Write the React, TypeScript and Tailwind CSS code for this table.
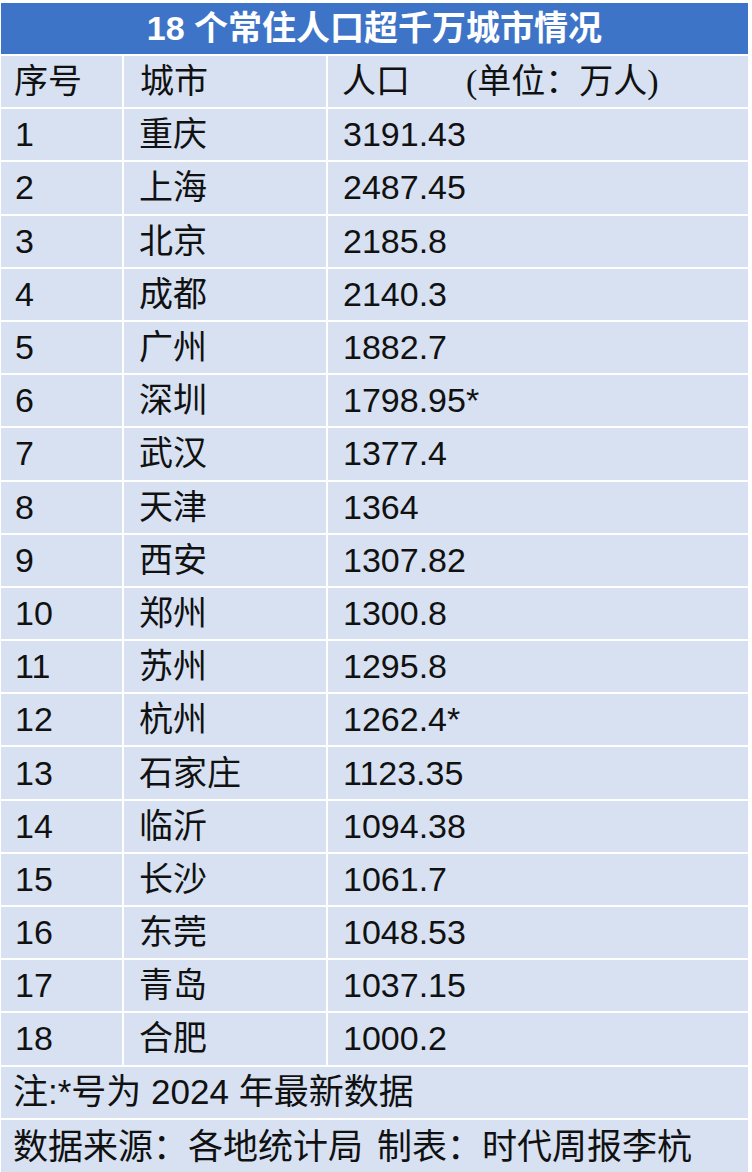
import React from 'react';

const rows: [string, string, string][] = [
  ['1', '重庆', '3191.43'],
  ['2', '上海', '2487.45'],
  ['3', '北京', '2185.8'],
  ['4', '成都', '2140.3'],
  ['5', '广州', '1882.7'],
  ['6', '深圳', '1798.95*'],
  ['7', '武汉', '1377.4'],
  ['8', '天津', '1364'],
  ['9', '西安', '1307.82'],
  ['10', '郑州', '1300.8'],
  ['11', '苏州', '1295.8'],
  ['12', '杭州', '1262.4*'],
  ['13', '石家庄', '1123.35'],
  ['14', '临沂', '1094.38'],
  ['15', '长沙', '1061.7'],
  ['16', '东莞', '1048.53'],
  ['17', '青岛', '1037.15'],
  ['18', '合肥', '1000.2'],
];

const sans = { fontFamily: '"Liberation Sans", "Noto Sans CJK SC", sans-serif' };

export default function App() {
  return (
    <div
      className="w-[752px] h-[1172px] overflow-hidden bg-white pt-[3px] pl-[1px] pr-[4px] flex flex-col gap-[2px] text-[#111]"
      style={sans}>
      <div className="h-[51px] shrink-0 bg-[#3d74c7] flex items-center justify-center text-white text-[34px] font-bold">
        18 个常住人口超千万城市情况
      </div>

      <div
        className="h-[51.2px] shrink-0 flex gap-[2px] text-[34px]"
        style={{ fontFamily: '"Liberation Serif", "Noto Sans CJK SC", serif' }}>
        <div className="w-[121px] bg-[#d7e1f2] flex items-center pl-[13px]">序号</div>
        <div className="w-[202px] bg-[#d7e1f2] flex items-center pl-[16px]">城市</div>
        <div className="flex-1 bg-[#d7e1f2] flex items-center pl-[14px]">
          <span>人口</span>
          <span className="ml-[56px]">(单位：万人)</span>
        </div>
      </div>

      {rows.map(([no, city, pop]) => (
        <div key={no} className="h-[51.2px] shrink-0 flex gap-[2px] text-[34px]">
          <div className="w-[121px] bg-[#d7e1f2] flex items-center pl-[14px]">{no}</div>
          <div className="w-[202px] bg-[#d7e1f2] flex items-center pl-[15px]">{city}</div>
          <div className="flex-1 bg-[#d7e1f2] flex items-center pl-[15px]">{pop}</div>
        </div>
      ))}

      <div className="h-[51.2px] shrink-0 bg-[#d7e1f2] flex items-center pl-[12px] text-[35px]">
        注:*号为 2024 年最新数据
      </div>
      <div className="h-[54px] shrink-0 bg-[#d7e1f2] flex items-center pl-[12px] text-[35px]">
        <span>数据来源：各地统计局</span>
        <span className="ml-[14px]">制表：时代周报李杭</span>
      </div>
    </div>
  );
}
